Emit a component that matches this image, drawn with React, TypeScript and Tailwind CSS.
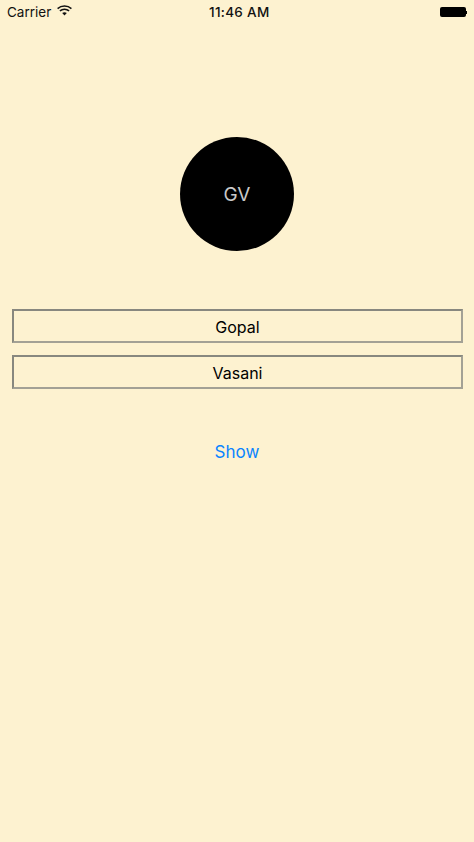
import React from "react"

function Wifi() {
  return (
    <svg width="15" height="11" viewBox="0 0 15 11" className="ml-[6px] mb-[3px]">
      <path d="M0.6 3.6C4.4 0.2 10.6 0.2 14.4 3.6" fill="none" stroke="#111" strokeWidth="1.5" />
      <path d="M2.9 5.9C5.5 3.6 9.5 3.6 12.1 5.9" fill="none" stroke="#111" strokeWidth="1.5" />
      <path d="M5.2 8C6.5 6.9 8.5 6.9 9.8 8L7.5 10.5Z" fill="#111" />
    </svg>
  )
}

export default function App() {
  return (
    <div className="h-[842px] w-[474px] overflow-hidden bg-[#fdf2d0] font-['Inter',sans-serif]">
      {/* Status bar */}
      <div className="relative flex h-[24px] items-center pl-[7px] pr-[7px] text-[#111]">
        <span className="mt-[1px] text-[13.5px] leading-none">Carrier</span>
        <Wifi />
        <span className="absolute left-[209px] top-[6px] text-[13.5px] font-medium leading-none tracking-[0.3px]">11:46 AM</span>
        <div className="ml-auto flex items-center">
          <div className="h-[10px] w-[26px] rounded-[2px] bg-black" />
          <div className="h-[3px] w-[1px] bg-black" />
        </div>
      </div>

      {/* Avatar */}
      <div className="mt-[113px] flex justify-center">
        <div className="flex h-[114px] w-[114px] items-center justify-center rounded-full bg-black pt-[3px] text-[19px] text-[#c8c8c8]">GV</div>
      </div>

      {/* Fields */}
      <div className="mt-[58px] flex flex-col gap-[12px] pl-[12px] pr-[11px]">
        <div className="flex h-[34px] items-center justify-center border-2 border-[#88887f] border-r-[#a3a195] border-b-[#a3a195] pt-[2px] text-[16px] text-black">Gopal</div>
        <div className="flex h-[34px] items-center justify-center border-2 border-[#88887f] border-r-[#a3a195] border-b-[#a3a195] pt-[2px] text-[16px] text-black">Vasani</div>
      </div>

      <div className="mt-[51px] text-center text-[17px] leading-[24px] text-[#0a84ff]">Show</div>
    </div>
  )
}
